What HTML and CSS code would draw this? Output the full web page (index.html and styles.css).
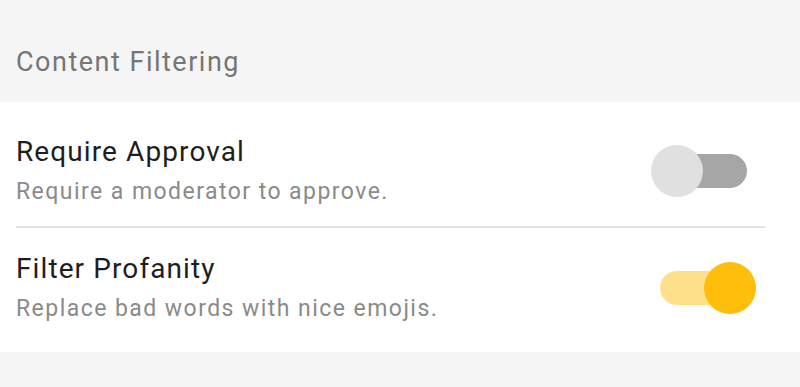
FILE: index.html
```html
<!DOCTYPE html>
<html>
<head>
<meta charset="utf-8">
<link rel="stylesheet" href="styles.css">
</head>
<body>
  <div class="section-header">Content Filtering</div>
  <div class="card">
    <div class="row row-divided">
      <div class="texts">
        <div class="title">Require Approval</div>
        <div class="subtitle">Require a moderator to approve.</div>
      </div>
      <div class="toggle">
        <div class="track"></div>
        <div class="thumb"></div>
      </div>
    </div>
    <div class="row">
      <div class="texts">
        <div class="title">Filter Profanity</div>
        <div class="subtitle">Replace bad words with nice emojis.</div>
      </div>
      <div class="toggle toggle-on">
        <div class="track"></div>
        <div class="thumb"></div>
      </div>
    </div>
  </div>
</body>
</html>
```
FILE: styles.css
```css
html, body {
  margin: 0;
  padding: 0;
  background: #f5f5f5;
  font-family: Roboto, "Liberation Sans", sans-serif;
}

.section-header {
  height: 102px;
  box-sizing: border-box;
  padding: 46px 0 0 16px;
  font-size: 27px;
  line-height: 32px;
  letter-spacing: 1.5px;
  color: #767676;
}

.card {
  background: #ffffff;
  padding: 9px 0 9px 0;
}

.row {
  display: flex;
  align-items: center;
  justify-content: space-between;
  margin: 0 35px 0 16px;
  padding: 25px 0 20px 0;
}

.row-divided {
  border-bottom: 2px solid #e3e3e3;
}

.title {
  font-size: 28px;
  line-height: 32px;
  letter-spacing: 1.1px;
  color: #1e1e1e;
}

.subtitle {
  margin-top: 10px;
  font-size: 23px;
  line-height: 28px;
  letter-spacing: 1.45px;
  color: #8a8a8a;
}

.toggle {
  position: relative;
  width: 105px;
  height: 52px;
  margin-right: 9px;
}

.track {
  position: absolute;
  left: 9px;
  right: 9px;
  top: 9px;
  height: 34px;
  border-radius: 17px;
  background: #a6a6a6;
}

.thumb {
  position: absolute;
  left: 0;
  top: 0;
  width: 52px;
  height: 52px;
  border-radius: 50%;
  background: #e0e0e0;
}

.toggle-on .track {
  background: #ffe08a;
}

.toggle-on .thumb {
  left: auto;
  right: 0;
  background: #ffbe0b;
}
```
